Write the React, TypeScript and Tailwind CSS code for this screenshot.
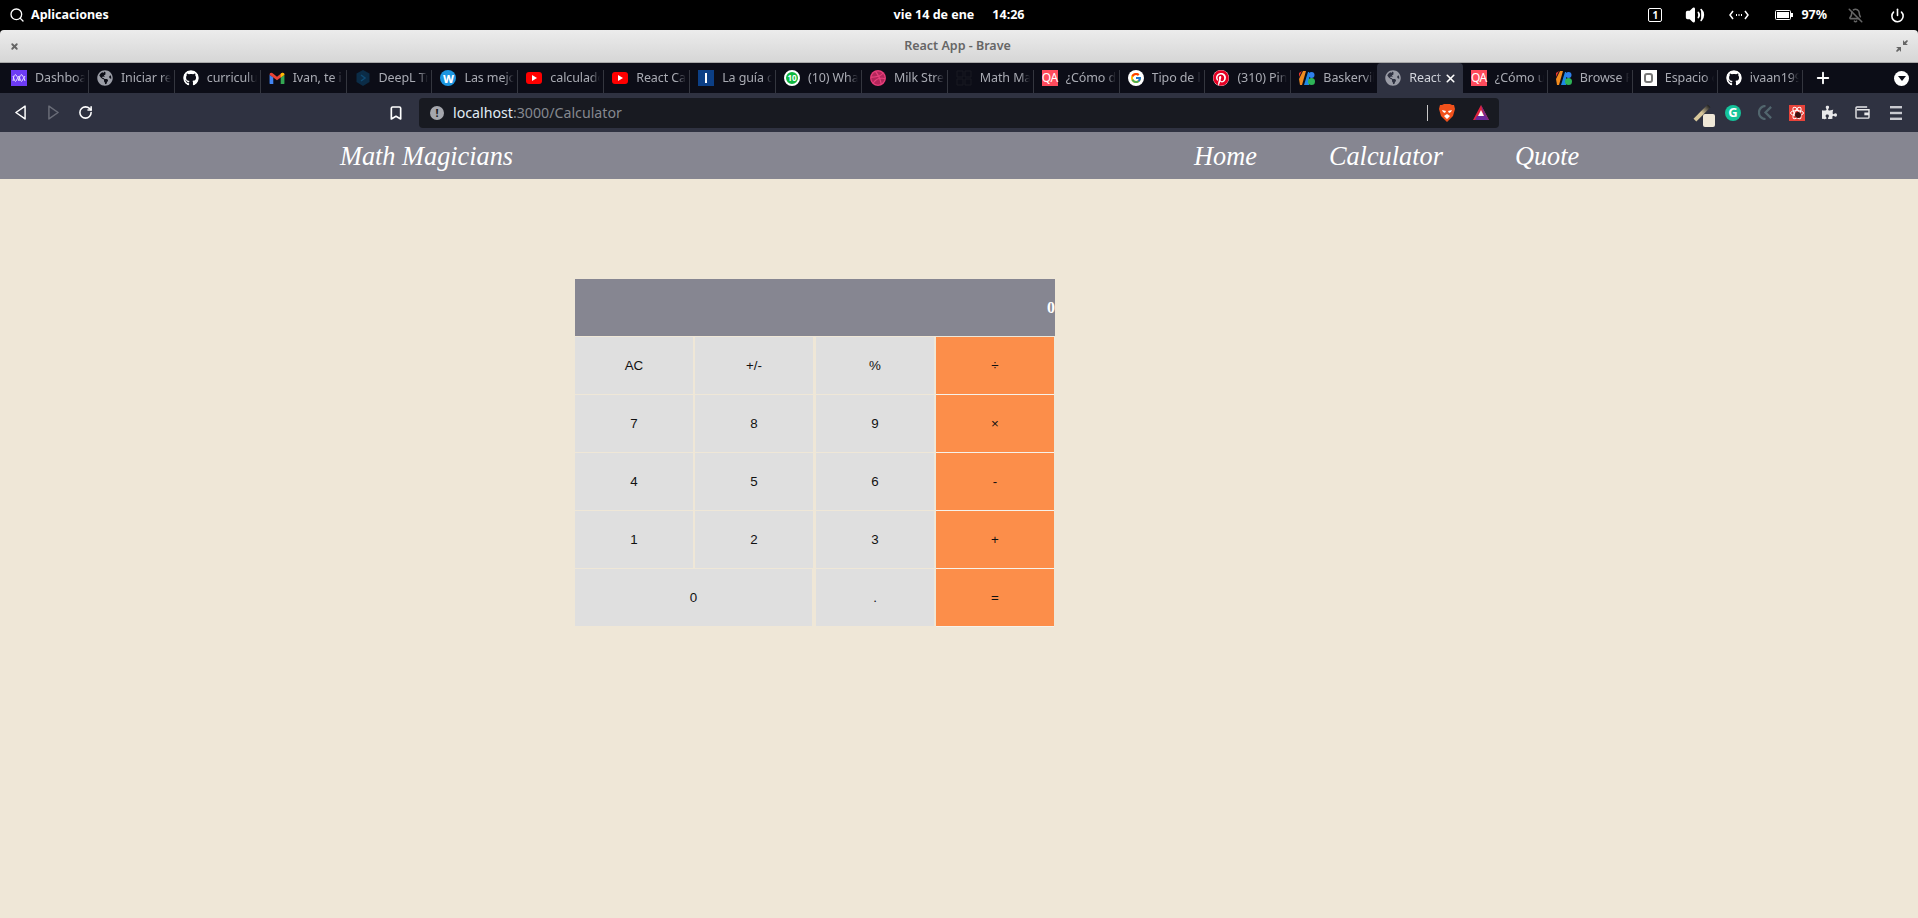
import { ReactNode } from "react";
import { Search, Volume2, BellOff, Power, X, Plus, RotateCw, Bookmark } from "lucide-react";
import { FaGithub, FaGlobeAmericas, FaPinterest, FaDribbble, FaPuzzlePiece } from "react-icons/fa";
import { FcGoogle } from "react-icons/fc";

const Globe = () => <FaGlobeAmericas className="h-4 w-4 text-[#9a9ca6]" />;
const Github = () => <FaGithub className="h-4 w-4 rounded-full bg-[#0c0d17] text-white" />;

const Youtube = () => (
  <span className="flex h-[12px] w-4 items-center justify-center rounded-[3px] bg-[#f00]">
    <span className="h-0 w-0 border-y-[3px] border-l-[5px] border-y-transparent border-l-white" />
  </span>
);

const QA = () => (
  <span className="flex h-4 w-4 items-center justify-center bg-[#ff4b5c] text-[12px] leading-none tracking-[-0.5px] text-white">QA</span>
);

const Baskerville = () => (
  <svg viewBox="0 0 16 16" className="h-4 w-4">
    <path d="M0 9 L4 1 H7 L3 15 H1 Z" fill="#f28b1e" />
    <path d="M3 1 L0 7 L0 3 Z" fill="#e8352e" />
    <path d="M5 15 L9 2 H10 V15 Z" fill="#1e88e5" />
    <circle cx="12.5" cy="5" r="3" fill="#2f80ed" />
    <circle cx="12.5" cy="11.5" r="3.5" fill="#2eb457" />
  </svg>
);

const Gmail = () => (
  <svg viewBox="0 0 16 14" className="h-[13px] w-4">
    <path d="M0 3 L4 6 V13 H1 Q0 13 0 12 Z" fill="#4285f4" />
    <path d="M12 6 L16 3 V12 Q16 13 15 13 H12 Z" fill="#34a853" />
    <path d="M0 3 Q0 0 3 1 L8 5 L13 1 Q16 0 16 3 L12 6 L8 9 L4 6 Z" fill="#ea4335" />
    <path d="M12 6 L16 3 Q16 0 13 1 L12 2 Z" fill="#fbbc04" />
  </svg>
);

const tabs: { title: string; icon: ReactNode; active?: boolean }[] = [
  {
    title: "Dashboard",
    icon: (
      <svg viewBox="0 0 16 16" className="h-4 w-4">
        <rect width="16" height="16" fill="#6d3bf5" />
        <path d="M2 11 Q3 3 5 5 T8 11 Q9 3 11 5 T14 11 M2 6 Q4 13 5 11 T8 6 Q10 13 11 11 T14 6" fill="none" stroke="#e6dcff" strokeWidth="1" />
      </svg>
    ),
  },
  { title: "Iniciar res", icon: <Globe /> },
  { title: "curriculum", icon: <Github /> },
  { title: "Ivan, te in", icon: <Gmail /> },
  {
    title: "DeepL Tra",
    icon: (
      <svg viewBox="0 0 16 16" className="h-4 w-4">
        <path d="M8 0 L14.5 3.5 V12 L8 16 L1.5 12 V3.5 Z" fill="#0b2c47" />
        <path d="M6 5 L10 8 L6 11" fill="none" stroke="#0f4a73" strokeWidth="1.5" />
      </svg>
    ),
  },
  {
    title: "Las mejor",
    icon: (
      <span className="flex h-4 w-4 items-center justify-center rounded-full bg-[#1b95e0] text-[11px] font-extrabold leading-none text-white">W</span>
    ),
  },
  { title: "calculador", icon: <Youtube /> },
  { title: "React Cal", icon: <Youtube /> },
  {
    title: "La guía de",
    icon: (
      <span className="flex h-4 w-4 items-center justify-center bg-[#0c3f86]">
        <span className="h-[10px] w-[2px] bg-white" />
      </span>
    ),
  },
  {
    title: "(10) What",
    icon: (
      <span className="flex h-4 w-4 items-center justify-center rounded-full border-2 border-white bg-[#0fb83f] text-[8px] font-bold leading-none text-white">10</span>
    ),
  },
  {
    title: "Milk Stree",
    icon: <FaDribbble className="h-4 w-4 rounded-full bg-[#b3265b] text-[#e8407c]" />,
  },
  {
    title: "Math Mag",
    icon: (
      <svg viewBox="0 0 16 16" className="h-4 w-4">
        <path d="M1 1 H7 V7 H1 Z M9 1 H15 V7 H9 Z M1 9 H7 V15 H1 Z M9 9 H15 V15 H9 Z" fill="none" stroke="#181a22" strokeWidth="1" />
      </svg>
    ),
  },
  { title: "¿Cómo de", icon: <QA /> },
  {
    title: "Tipo de le",
    icon: (
      <span className="flex h-4 w-4 items-center justify-center rounded-full bg-white">
        <FcGoogle className="h-3 w-3" />
      </span>
    ),
  },
  {
    title: "(310) Pint",
    icon: (
      <span className="flex h-4 w-4 items-center justify-center rounded-full bg-white">
        <FaPinterest className="h-4 w-4 text-[#e60023]" />
      </span>
    ),
  },
  { title: "Baskervill", icon: <Baskerville /> },
  { title: "React App", icon: <Globe />, active: true },
  { title: "¿Cómo us", icon: <QA /> },
  { title: "Browse Fo", icon: <Baskerville /> },
  {
    title: "Espacio de",
    icon: (
      <span className="flex h-4 w-4 items-center justify-center bg-white">
        <span className="h-[10px] w-[9px] rounded-[3px] border-2 border-[#777]" />
      </span>
    ),
  },
  { title: "ivaan1996", icon: <Github /> },
];

const keys = [
  ["AC", "+/-", "%", "÷"],
  ["7", "8", "9", "×"],
  ["4", "5", "6", "-"],
  ["1", "2", "3", "+"],
];

const TopBar = () => (
  <div className="flex h-[30px] items-center justify-between bg-black text-[12.5px] font-bold text-white">
    <div className="flex flex-1 items-center">
      <Search className="ml-[9px] h-4 w-4" strokeWidth={2} />
      <span className="ml-[6px]">Aplicaciones</span>
    </div>
    <div className="flex items-center gap-[18px]">
      <span>vie 14 de ene</span>
      <span>14:26</span>
    </div>
    <div className="flex flex-1 items-center justify-end">
      <span className="flex h-[14px] w-[14px] items-center justify-center rounded-[2px] border border-white text-[10px] font-bold leading-none">1</span>
      <Volume2 className="ml-[23px] h-5 w-5 fill-white" strokeWidth={2} />
      <svg viewBox="0 0 20 10" className="ml-[24px] h-[10px] w-5" fill="none" stroke="white" strokeWidth="1.5">
        <path d="M4 1 L1 5 L4 9 M16 1 L19 5 L16 9" />
        <path d="M7 5 H8 M9.5 5 H10.5 M12 5 H13" strokeWidth="2" />
      </svg>
      <svg viewBox="0 0 18 10" className="ml-[26px] h-[10px] w-[18px]">
        <rect x="0.5" y="0.5" width="15" height="9" rx="1" fill="none" stroke="white" />
        <rect x="2" y="2" width="12" height="6" fill="white" />
        <rect x="16" y="3" width="2" height="4" fill="white" />
      </svg>
      <span className="ml-[8px]">97%</span>
      <BellOff className="ml-[21px] h-[15px] w-[15px] text-[#666]" strokeWidth={2.5} />
      <Power className="ml-[27px] mr-[13px] h-[15px] w-[15px]" strokeWidth={2.5} />
    </div>
  </div>
);

const TitleBar = () => (
  <div className="flex h-[33px] items-center justify-between rounded-t-[4px] border-b border-[#a8a8a8] bg-gradient-to-b from-[#ececec] to-[#d6d6d6] px-[10px] text-[12.5px] font-semibold text-[#666]">
    <X className="h-[9px] w-[9px]" strokeWidth={5} />
    <span>React App - Brave</span>
    <svg viewBox="0 0 12 12" className="h-3 w-3 text-[#666]" fill="currentColor">
      <path d="M7 0 V5 H12 L10 3.5 L12 1 L11 0 L8.5 2 Z M5 12 V7 H0 L2 8.5 L0 11 L1 12 L3.5 10 Z" />
    </svg>
  </div>
);

const TabStrip = () => (
  <div className="flex h-[30px] items-stretch bg-[#0c0d17] pl-[3px] text-[12.5px] tracking-[-0.1px] text-[#a9abb3]">
    {tabs.map((tab, i) => (
      <div
        key={tab.title}
        className={
          tab.active
            ? "flex w-[85.6px] items-center rounded-t-[4px] bg-[#2f3241] pl-[8px] text-[#d3d6dd]"
            : i > 16
              ? "flex w-[85px] items-center pl-[8px]"
              : "flex w-[85.9px] items-center pl-[8px]"
        }
      >
        <span className="flex h-4 w-4 shrink-0 items-center justify-center">{tab.icon}</span>
        <span className="ml-[8px] min-w-0 flex-1 overflow-hidden whitespace-nowrap [mask-image:linear-gradient(to_right,black_80%,transparent_100%)]">
          {tab.title}
        </span>
        {tab.active && <X className="mr-[6px] h-[13px] w-[13px] shrink-0 text-white" strokeWidth={3} />}
        {!tab.active && <span className="w-[3px] shrink-0" />}
        {!tab.active && i !== 15 && <span className="h-[23px] w-px shrink-0 self-end bg-[#34363f]" />}
      </div>
    ))}
    <Plus className="ml-[11px] h-[18px] w-[18px] self-center text-white" strokeWidth={2.5} />
    <span className="ml-auto mr-[9px] flex h-[15px] w-[15px] items-center justify-center self-center rounded-full bg-white">
      <span className="mt-px h-0 w-0 border-x-[4px] border-t-[5px] border-x-transparent border-t-[#0c0d17]" />
    </span>
  </div>
);

const Toolbar = () => (
  <div className="flex h-[39px] items-center bg-[#2f3241]">
    <svg viewBox="0 0 12 16" className="ml-[15px] h-[15px] w-[11px]" fill="none" stroke="white" strokeWidth="1.6" strokeLinejoin="round">
      <path d="M11 1 V15 L1 8 Z" />
    </svg>
    <svg viewBox="0 0 12 16" className="ml-[22px] h-[15px] w-[11px]" fill="none" stroke="#6a6d78" strokeWidth="1.6" strokeLinejoin="round">
      <path d="M1 1 V15 L11 8 Z" />
    </svg>
    <RotateCw className="ml-[19px] h-[15px] w-[15px] text-white" strokeWidth={2.5} />
    <Bookmark className="ml-[295px] h-[18px] w-[16px] text-white" strokeWidth={2.5} />
    <div className="ml-[15px] flex h-[30px] w-[1080px] items-center rounded-[4px] bg-[#181a21] text-[14.2px]">
      <span className="ml-[11px] flex h-[14px] w-[14px] items-center justify-center rounded-full bg-[#a5a7ad] text-[11px] font-bold leading-none text-[#181a21]">!</span>
      <span className="ml-[9px] text-[#e0ecf5]">localhost</span>
      <span className="text-[#85888f]">:3000/Calculator</span>
      <span className="ml-auto h-[16px] w-px bg-[#c8c8c8]" />
      <svg viewBox="0 0 16 18" className="ml-[11px] h-[18px] w-4">
        <path d="M3 1 L5 0 H11 L13 1 L15 1 L16 5 L14 12 L8 18 L2 12 L0 5 L1 1 Z" fill="#f1511b" />
        <path d="M8 10 L11 12 L8 15 L5 12 Z M3 6 L7 7 L6 9 L4 8 Z M13 6 L9 7 L10 9 L12 8 Z" fill="white" />
      </svg>
      <svg viewBox="0 0 16 15" className="ml-[18px] mr-[10px] h-[15px] w-4">
        <path d="M8 0 L16 15 H0 Z" fill="#e0243e" />
        <path d="M8 0 L16 15 H12 Z" fill="#7b2a87" />
        <path d="M2 15 L4 11 H12 L14 15 Z" fill="#6a2a9c" />
        <path d="M8 5 L11 11 H5 Z" fill="white" />
      </svg>
    </div>
    <div className="relative ml-[195px] h-[16px] w-[14px]">
      <span className="absolute -top-[2px] left-[6px] h-[20px] w-[4px] rotate-45 bg-gradient-to-b from-[#222] via-[#d8c79a] to-[#d8c79a]" />
      <span className="absolute left-[9px] top-[9px] h-[13px] w-[12px] rounded-[2px] bg-[#efe7d7]" />
    </div>
    <span className="ml-[17px] flex h-4 w-4 items-center justify-center rounded-full bg-[#15c39a] text-[13px] font-bold leading-none text-white">G</span>
    <svg viewBox="0 0 16 16" className="ml-[17px] h-[15px] w-[15px]" fill="none" stroke="#52666e" strokeWidth="2.4">
      <path d="M8 1 A7 7 0 0 0 8 15 M14 2 L8 8 L14 14" />
    </svg>
    <svg viewBox="0 0 16 16" className="ml-[16px] h-4 w-4">
      <rect width="16" height="16" fill="#e8433a" />
      <g fill="none" stroke="white" strokeWidth="1">
        <ellipse cx="8" cy="8" rx="6.5" ry="2.5" />
        <ellipse cx="8" cy="8" rx="6.5" ry="2.5" transform="rotate(60 8 8)" />
        <ellipse cx="8" cy="8" rx="6.5" ry="2.5" transform="rotate(120 8 8)" />
      </g>
      <circle cx="9" cy="10" r="3" fill="#3a1210" />
    </svg>
    <FaPuzzlePiece className="ml-[17px] h-[15px] w-[15px] text-[#e8e8ea]" />
    <svg viewBox="0 0 16 14" className="ml-[18px] h-[13px] w-[15px]" fill="none" stroke="#e8e8ea" strokeWidth="1.5">
      <path d="M13 1 H2 Q1 1 1 2 V12 Q1 13 2 13 H14 Q15 13 15 12 V4 H2" />
      <rect x="10" y="7" width="5" height="3" fill="#e8e8ea" stroke="none" />
    </svg>
    <svg viewBox="0 0 12 14" className="ml-[20px] h-[14px] w-3" fill="#c9cad0">
      <rect y="0" width="12" height="2.4" />
      <rect y="5.8" width="12" height="2.4" />
      <rect y="11.6" width="12" height="2.4" />
    </svg>
  </div>
);

const Nav = () => (
  <nav className="flex h-[47px] items-center bg-[#868691] pt-[2px] font-['Liberation_Serif',serif] text-[26.3px] italic text-white">
    <span className="ml-[340px]">Math Magicians</span>
    <ul className="ml-[681px] flex gap-[72px]">
      <li>Home</li>
      <li>Calculator</li>
      <li>Quote</li>
    </ul>
  </nav>
);

const CalcKey = ({ label, index }: { label: string; index: number }) => {
  if (index === 3) {
    return (
      <button className="bg-[#fc8e4a] shadow-[0_1px_0_#f6f2ea]">{label}</button>
    );
  }
  return (
    <button className={index === 2 ? "ml-px bg-[#dfdfdf]" : "bg-[#dfdfdf]"}>{label}</button>
  );
};

const Calculator = () => (
  <div className="ml-[575px] mt-[100px] w-[480px] font-['Liberation_Sans',sans-serif] text-[13.33px] text-[#111]">
    <div className="mb-px flex h-[57px] items-center justify-end bg-[#868691] font-['Liberation_Serif',serif] text-[16px] font-bold text-white">
      0
    </div>
    <div className="grid grid-cols-[118px_118px_119px_118px] auto-rows-[57px] gap-x-[2px] gap-y-px">
      {keys.map((row) =>
        row.map((label, i) => <CalcKey key={label} label={label} index={i} />),
      )}
      <button className="col-span-2 mr-px bg-[#dfdfdf]">0</button>
      <CalcKey label="." index={2} />
      <CalcKey label="=" index={3} />
    </div>
  </div>
);

export default function App() {
  return (
    <div className="flex h-[918px] w-[1918px] flex-col overflow-hidden bg-black font-['Noto_Sans',sans-serif]">
      <TopBar />
      <TitleBar />
      <TabStrip />
      <Toolbar />
      <Nav />
      <main className="flex-1 bg-[#efe7d7]">
        <Calculator />
      </main>
    </div>
  );
}
